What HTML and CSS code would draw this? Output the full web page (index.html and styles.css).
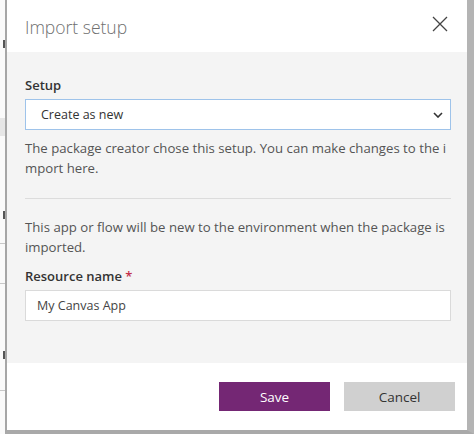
FILE: index.html
```html
<!DOCTYPE html>
<html>
<head>
<meta charset="utf-8">
<link rel="stylesheet" href="styles.css">
</head>
<body>
<div class="screen">
  <div class="strip">
    <span class="frag-mark mark-a"></span>
    <span class="frag-block"></span>
    <span class="frag-mark mark-b"></span>
    <span class="frag-line line-a"></span>
    <span class="frag-line line-b"></span>
    <span class="frag-mark mark-c"></span>
    <span class="frag-line line-c"></span>
  </div>
  <div class="dialog">
    <div class="header">
      <h1 class="title">Import setup</h1>
      <svg class="close" width="16" height="16" viewBox="0 0 16 16"><path d="M1 1 L15 15 M15 1 L1 15" stroke="#444" stroke-width="1.3" fill="none"/></svg>
    </div>
    <div class="content">
      <label class="label">Setup</label>
      <div class="select">
        <span>Create as new</span>
        <svg class="chev" width="10" height="6" viewBox="0 0 10 6"><path d="M1 1 L5 5 L9 1" stroke="#333" stroke-width="1.6" fill="none"/></svg>
      </div>
      <p class="help">The package creator chose this setup. You can make changes to the i<br>mport here.</p>
      <hr class="divider">
      <p class="help second">This app or flow will be new to the environment when the package is<br>imported.</p>
      <label class="label">Resource name <span class="req">*</span></label>
      <div class="input">My Canvas App</div>
    </div>
    <div class="footer">
      <button class="btn primary">Save</button>
      <button class="btn secondary">Cancel</button>
    </div>
  </div>
</div>
</body>
</html>
```
FILE: styles.css
```css
html, body {
  margin: 0;
  padding: 0;
}
body {
  width: 474px;
  height: 434px;
  overflow: hidden;
  background: #ffffff;
  font-family: "Open Sans", "Noto Sans", sans-serif;
}
.screen {
  display: flex;
  width: 474px;
  height: 434px;
}
.strip {
  width: 5px;
  position: relative;
  background: #fafafa;
  overflow: hidden;
}
.frag-mark {
  position: absolute;
  right: 0;
  width: 2px;
  height: 8px;
  background: #555;
}
.mark-a { top: 40px; }
.mark-b { top: 211px; }
.mark-c { top: 351px; }
.frag-block {
  position: absolute;
  left: 0;
  top: 118px;
  width: 5px;
  height: 18px;
  background: #e6e6e6;
}
.frag-line {
  position: absolute;
  left: 0;
  width: 5px;
  height: 1px;
  background: #c8c8c8;
}
.line-a { top: 243px; }
.line-b { top: 283px; }
.line-c { top: 390px; }
.dialog {
  flex: 1;
  display: flex;
  flex-direction: column;
  background: #ffffff;
  border-left: 2px solid #a6a6a6;
  border-right: 7px solid #b4b4b4;
  border-bottom: 4px solid #a9a9a9;
}
.header {
  height: 52px;
  display: flex;
  align-items: center;
  justify-content: space-between;
  padding: 0 19px 0 18px;
  box-sizing: border-box;
}
.title {
  margin: 0;
  font-size: 17.5px;
  font-weight: 300;
  color: #707070;
  padding-top: 2px;
}
.close {
  margin-top: -5px;
}
.content {
  background: #f4f4f4;
  padding: 24px 16px 0 18px;
  height: 311px;
  box-sizing: border-box;
}
.label {
  display: block;
  font-size: 13px;
  font-weight: 600;
  color: #333;
  line-height: 18px;
}
.req {
  color: #c4314b;
}
.select {
  margin-top: 5px;
  height: 31px;
  box-sizing: border-box;
  border: 1px solid #9ec3ea;
  background: #fff;
  display: flex;
  align-items: center;
  justify-content: space-between;
  padding: 0 7px 0 15px;
  font-size: 12.5px;
  color: #333;
}
.help {
  margin: 8px 0 0 0;
  font-size: 13.2px;
  line-height: 20px;
  color: #555;
}
.divider {
  border: 0;
  border-top: 1px solid #dcdcdc;
  margin: 20px 0 0 0;
}
.help.second {
  margin-top: 18px;
  margin-bottom: 10px;
}
.input {
  margin-top: 5px;
  height: 31px;
  box-sizing: border-box;
  border: 1px solid #dadada;
  background: #fff;
  display: flex;
  align-items: center;
  padding: 0 11px;
  font-size: 12.5px;
  color: #444;
}
.footer {
  flex: 1;
  display: flex;
  justify-content: flex-end;
  align-items: flex-start;
  gap: 14px;
  padding: 19px 12px 0 0;
}
.btn {
  width: 111px;
  height: 29px;
  border: 0;
  font-family: "Open Sans", "Noto Sans", sans-serif;
  font-size: 13.5px;
  cursor: pointer;
}
.primary {
  background: #742774;
  color: #fff;
}
.secondary {
  background: #d0d0d0;
  color: #333;
}
```
